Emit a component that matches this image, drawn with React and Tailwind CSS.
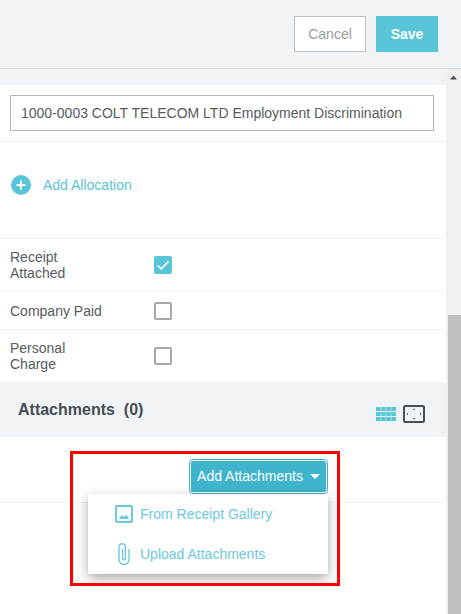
function Check({ checked }) {
    if (checked) {
        return (
            <div className="w-[18px] h-[18px] rounded-[2px] bg-[#58c5d9] flex items-center justify-center">
                <svg width="14" height="14" viewBox="0 0 14 14" fill="none">
                    <path d="M1.5 7.5l3.7 3.3L12.5 3.4" stroke="#fff" strokeWidth="1.6" />
                </svg>
            </div>
        );
    }
    return <div className="w-[18px] h-[18px] rounded-[2px] border-2 border-[#a6a8aa] bg-white" />;
}

function Row({ label, checked, height, last }) {
    return (
        <div className={`flex items-center pl-[10px] ${height} ${last ? "" : "border-b border-[#f0f2f4]"}`}>
            <div className="w-[144px] text-[14px] leading-[16px] text-[#555b60]">{label}</div>
            <Check checked={checked} />
        </div>
    );
}

export default function App() {
    return (
        <div className="relative h-[614px] w-[461px] overflow-hidden bg-white font-['Liberation_Sans',Arial,sans-serif]">
            {/* header */}
            <div className="flex h-[69px] items-start justify-end gap-[10px] border-b border-[#d5d9dc] bg-[#f0f4f7] pr-[23px] pt-[16px]">
                <button className="h-[36px] w-[72px] border border-[#bfc2c4] bg-white text-[14px] text-[#999c9e]">
                    Cancel
                </button>
                <button className="h-[36px] w-[62px] bg-[#58c5d9] text-[14px] font-bold text-white">Save</button>
            </div>

            <div className="flex h-[545px]">
                <div className="w-[446px] shrink-0">
                    <div className="h-[16px] bg-[#f0f4f7]" />

                    <div className="border-b border-[#f0f2f4] px-[10px] py-[10px]">
                        <div className="flex h-[36px] w-[424px] items-center border border-[#b5b7b9] pl-[10px] text-[14px] text-[#555b60]">
                            1000-0003 COLT TELECOM LTD Employment Discrimination
                        </div>
                    </div>

                    <div className="flex h-[97px] items-center border-b border-[#f0f2f4] pb-[10px] pl-[11px]">
                        <svg width="20" height="20" viewBox="0 0 20 20">
                            <circle cx="10" cy="10" r="10" fill="#58c5d9" />
                            <path d="M10 5.5v9M5.5 10h9" stroke="#fff" strokeWidth="2" />
                        </svg>
                        <span className="ml-[12px] text-[14px] text-[#58c5d9]">Add Allocation</span>
                    </div>

                    <Row label={<>Receipt<br />Attached</>} checked height="h-[53px]" />
                    <Row label="Company Paid" height="h-[38px]" />
                    <Row label={<>Personal<br />Charge</>} height="h-[52px]" last />

                    <div className="flex h-[55px] items-center justify-between bg-[#f0f4f7] pl-[18px] pr-[21px]">
                        <div className="text-[16px] font-bold text-[#474d52] whitespace-pre">Attachments  (0)</div>
                        <div className="mt-[9px] flex items-center gap-[7px]">
                            <svg width="20" height="14" viewBox="0 0 20 14">
                                <path fill="#58c5d9" d="M0 0h20v4H0zM0 5h20v4H0zM0 10h20v4H0z" />
                                <path stroke="#a9e2ec" strokeWidth="1" d="M5 0v14M10 0v14M15 0v14" />
                            </svg>
                            <svg width="22" height="18" viewBox="0 0 22 18" fill="none">
                                <rect x="1" y="1" width="20" height="16" rx="1.5" stroke="#474d52" strokeWidth="2" />
                                <path fill="#6a6f73" d="M11 3.5l1.5 1.5h-3zM11 14.5l1.5-1.5h-3zM3.5 9L5 7.5v3zM18.500 9L17 7.500v3z" />
                            </svg>
                        </div>
                    </div>

                    <div className="flex h-[66px] justify-end border-b border-[#f0f2f4] pr-[119px] pt-[23px]">
                        <button className="flex h-[33px] w-[137px] items-center justify-center gap-[7px] rounded-[3px] border border-white bg-[#3fb4cd] text-[14px] text-white outline outline-1 outline-[#3fb4cd]">
                            Add Attachments
                            <span className="border-x-[5px] border-t-[5px] border-x-transparent border-t-white" />
                        </button>
                    </div>
                </div>

                {/* scrollbar */}
                <div className="flex flex-1 flex-col bg-[#f0f0f0]">
                    <div className="flex h-[17px] justify-center">
                        <svg width="9" height="17" viewBox="0 0 9 17">
                            <path fill="#505050" d="M4.5 6.500L8 10.500H1z" />
                        </svg>
                    </div>
                    <div className="ml-[2px] mt-[229px] h-[299px] bg-[#c1c1c1]" />
                </div>
            </div>

            {/* dropdown */}
            <div className="absolute left-[88px] top-[494px] h-[80px] w-[240px] rounded-[2px] bg-white shadow-[0_4px_12px_rgba(0,0,0,0.35)]">
                <div className="flex h-[40px] items-center pl-[27px] text-[14px] text-[#6cc9db]">
                    <svg width="18" height="18" viewBox="0 0 18 18" fill="none">
                        <rect x="1" y="1" width="16" height="16" rx="1" stroke="#6cc9db" strokeWidth="2" />
                        <path fill="#6cc9db" d="M3.500 14l3.500-4 2 2 2-2.600 3.500 4.600z" />
                    </svg>
                    <span className="ml-[7px]">From Receipt Gallery</span>
                </div>
                <div className="flex h-[40px] items-center pl-[30px] text-[14px] text-[#6cc9db]">
                    <svg width="12" height="22" viewBox="0 0 12 22" fill="none">
                        <path
                            d="M11 6v10.500a5 5 0 0 1-10 0V4a3.200 3.200 0 0 1 6.400 0v11.500a1.400 1.400 0 0 1-2.800 0V6"
                            stroke="#6cc9db"
                            strokeWidth="1.4"
                        />
                    </svg>
                    <span className="ml-[10px]">Upload Attachments</span>
                </div>
            </div>

            {/* annotation */}
            <div className="pointer-events-none absolute left-[70px] top-[451px] h-[135px] w-[270px] border-[3px] border-[#ff0000]" />
        </div>
    );
}
